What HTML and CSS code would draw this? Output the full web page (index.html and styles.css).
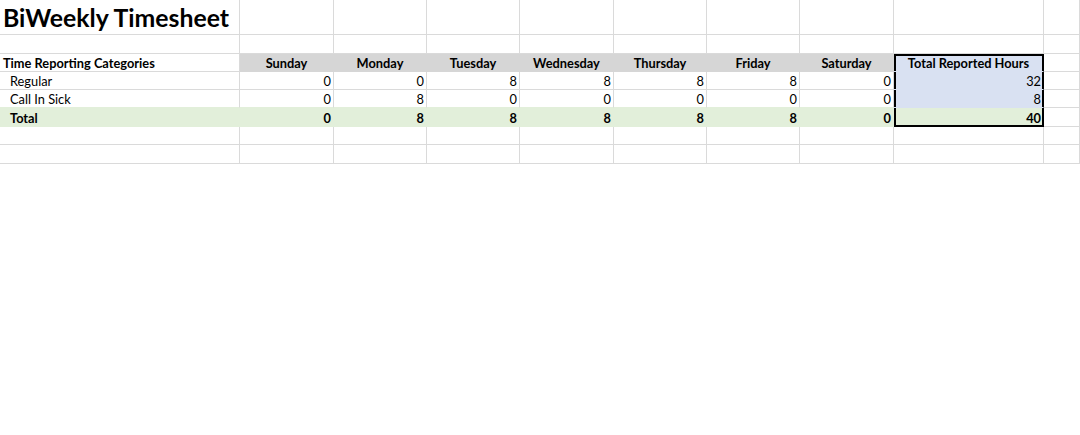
FILE: index.html
```html
<!DOCTYPE html>
<html>
<head>
<meta charset="utf-8">
<link rel="stylesheet" href="styles.css">
</head>
<body>
<div class="sheet">
  <!-- row 1 -->
  <div class="c title">BiWeekly Timesheet</div>
  <div class="c"></div><div class="c"></div><div class="c"></div><div class="c"></div><div class="c"></div><div class="c"></div><div class="c"></div><div class="c"></div><div class="c"></div>
  <!-- row 2 -->
  <div class="c"></div><div class="c"></div><div class="c"></div><div class="c"></div><div class="c"></div><div class="c"></div><div class="c"></div><div class="c"></div><div class="c"></div><div class="c"></div>
  <!-- header -->
  <div class="c lbl b">Time Reporting Categories</div>
  <div class="c hd">Sunday</div>
  <div class="c hd">Monday</div>
  <div class="c hd">Tuesday</div>
  <div class="c hd">Wednesday</div>
  <div class="c hd">Thursday</div>
  <div class="c hd">Friday</div>
  <div class="c hd">Saturday</div>
  <div class="c tot-hd">Total Reported Hours</div>
  <div class="c"></div>
  <!-- regular -->
  <div class="c lbl ind">Regular</div>
  <div class="c num">0</div>
  <div class="c num">0</div>
  <div class="c num">8</div>
  <div class="c num">8</div>
  <div class="c num">8</div>
  <div class="c num">8</div>
  <div class="c num">0</div>
  <div class="c num tot-mid">32</div>
  <div class="c"></div>
  <!-- call in sick -->
  <div class="c lbl ind pre">Call In Sick</div>
  <div class="c num pre">0</div>
  <div class="c num pre">8</div>
  <div class="c num pre">0</div>
  <div class="c num pre">0</div>
  <div class="c num pre">0</div>
  <div class="c num pre">0</div>
  <div class="c num pre">0</div>
  <div class="c num tot-mid">8</div>
  <div class="c"></div>
  <!-- total -->
  <div class="c lbl ind b sum">Total</div>
  <div class="c num b sum">0</div>
  <div class="c num b sum">8</div>
  <div class="c num b sum">8</div>
  <div class="c num b sum">8</div>
  <div class="c num b sum">8</div>
  <div class="c num b sum">8</div>
  <div class="c num b sum">0</div>
  <div class="c num b tot-end">40</div>
  <div class="c"></div>
  <!-- empty rows -->
  <div class="c"></div><div class="c"></div><div class="c"></div><div class="c"></div><div class="c"></div><div class="c"></div><div class="c"></div><div class="c"></div><div class="c"></div><div class="c"></div>
  <div class="c"></div><div class="c"></div><div class="c"></div><div class="c"></div><div class="c"></div><div class="c"></div><div class="c"></div><div class="c"></div><div class="c"></div><div class="c"></div>
</div>
</body>
</html>
```

FILE: styles.css
```css
* { box-sizing: border-box; }
html, body { margin: 0; padding: 0; background: #ffffff; }
body {
  font-family: Lato, "Liberation Sans", sans-serif;
  font-size: 12.8px;
  color: #000;
}
.sheet {
  display: grid;
  width: 1080px;
  grid-template-columns: 240px 94px 93px 93px 94px 93px 93px 94px 150px 36px;
  grid-template-rows: 35px 19px 18px 18px 18px 19px 18px 19px;
}
.c {
  border-right: 1px solid #dadada;
  border-bottom: 1px solid #dadada;
  display: flex;
  align-items: flex-end;
  padding-bottom: 1px;
  white-space: nowrap;
  line-height: 1;
}
.title {
  font-size: 24.8px;
  font-weight: 700;
  padding-left: 3px;
  padding-bottom: 3px;
}
.lbl { padding-left: 3px; }
.ind { padding-left: 10px; }
.b { font-weight: 700; }
.num { justify-content: flex-end; padding-right: 2px; }
.hd {
  background: #d6d6d6;
  border-color: #d6d6d6;
  justify-content: center;
  font-weight: 700;
}
.pre { border-bottom-color: #e2efda; }
.sum {
  background: #e2efda;
  border-color: #e2efda;
}
.tot-hd {
  background: #d9e1f2;
  border-right-color: #000;
  border-bottom-color: #d9e1f2;
  justify-content: center;
  font-weight: 700;
  box-shadow: inset 2px 2px 0 #000, inset -1px 0 0 #000;
}
.tot-mid {
  background: #d9e1f2;
  border-right-color: #000;
  border-bottom-color: #d9e1f2;
  box-shadow: inset 2px 0 0 #000, inset -1px 0 0 #000;
}
.tot-end {
  background: #e2efda;
  border-right-color: #000;
  border-bottom-color: #000;
  box-shadow: inset 2px -1px 0 #000, inset -1px 0 0 #000;
}
```
